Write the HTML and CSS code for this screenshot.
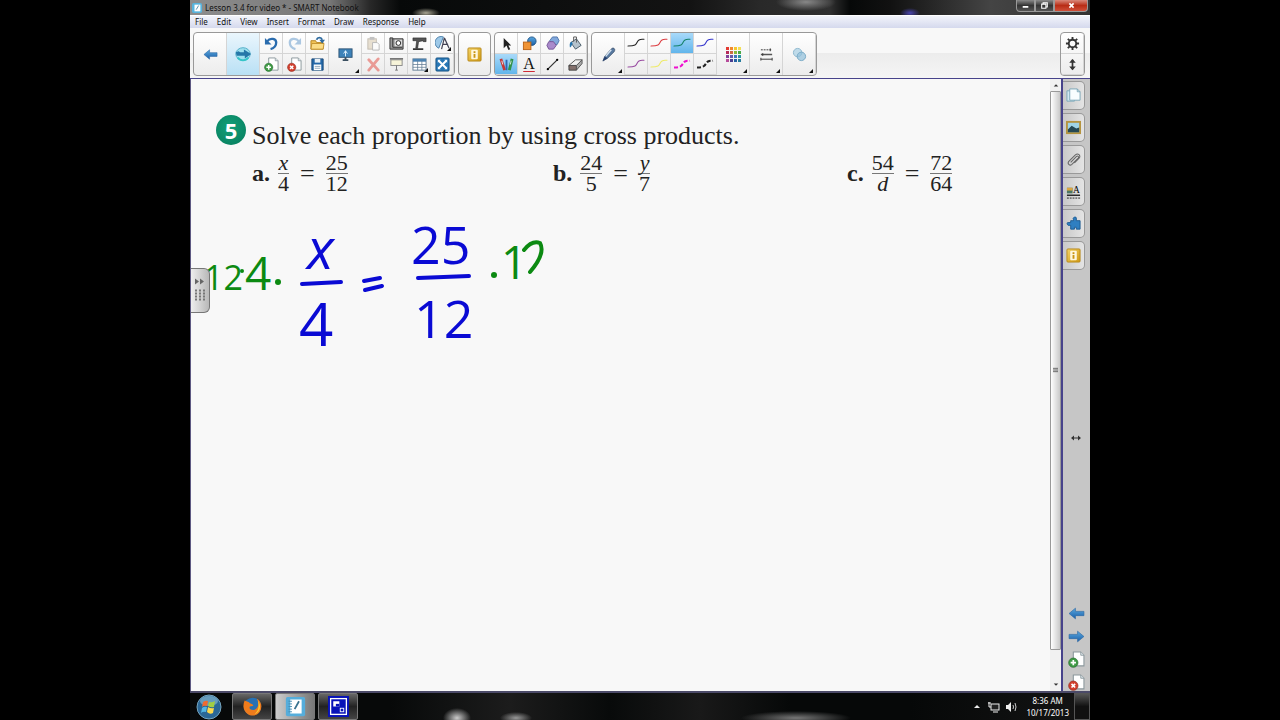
FILE: index.html
```html
<!DOCTYPE html>
<html lang="en">
<head>
    <meta charset="UTF-8">
    <meta name="viewport" content="width=device-width, initial-scale=1.0">
    <title>Lesson 3.4 for video * - SMART Notebook</title>
    <link rel="stylesheet" href="styles.css">
</head>
<body>
    <!-- Shared icons -->
    <svg class="defs" aria-hidden="true">
        <defs>
            <linearGradient id="blue" x1="0" y1="0" x2="0" y2="1">
                <stop offset="0" stop-color="#5aa9e0"/>
                <stop offset="1" stop-color="#1b5fa8"/>
            </linearGradient>
            <linearGradient id="gold" x1="0" y1="0" x2="1" y2="1">
                <stop offset="0" stop-color="#f3d367"/>
                <stop offset="1" stop-color="#d09a12"/>
            </linearGradient>
            <symbol id="arrow-left" viewBox="0 0 16 16"><path d="M1 8l6-5v3h8v4H7v3z" fill="url(#blue)" stroke="#2c68a4" stroke-width=".6"/></symbol>
            <symbol id="arrow-right" viewBox="0 0 16 16"><path d="M15 8L9 3v3H1v4h8v3z" fill="url(#blue)" stroke="#2c68a4" stroke-width=".6"/></symbol>
            <symbol id="page-add" viewBox="0 0 16 16">
                <path d="M5 1h7l3 3v10H5z" fill="#fff" stroke="#8b979c"/><path d="M12 1v3h3" fill="#dbe4e8" stroke="#8b979c" stroke-width=".8"/>
                <circle cx="5" cy="11" r="4.4" fill="#3f9a45" stroke="#226a2b" stroke-width=".6"/><path d="M5 8.5v5M2.5 11h5" stroke="#fff" stroke-width="1.6"/>
            </symbol>
            <symbol id="page-delete" viewBox="0 0 16 16">
                <path d="M5 1h7l3 3v10H5z" fill="#fff" stroke="#8b979c"/><path d="M12 1v3h3" fill="#dbe4e8" stroke="#8b979c" stroke-width=".8"/>
                <circle cx="5" cy="11" r="4.4" fill="#d3402f" stroke="#8e2418" stroke-width=".6"/><path d="M3.3 9.3l3.4 3.4M6.7 9.3l-3.4 3.4" stroke="#fff" stroke-width="1.6"/>
            </symbol>
            <symbol id="info" viewBox="0 0 16 16">
                <rect x="1" y="1" width="14" height="14" rx="1" fill="url(#gold)" stroke="#b98a1c"/>
                <rect x="4.5" y="3" width="7" height="10" rx="1" fill="#fff8df"/><rect x="7" y="4.5" width="2" height="2" fill="#c99512"/><rect x="7" y="7.5" width="2" height="4" fill="#c99512"/>
            </symbol>
            <symbol id="curve" viewBox="0 0 18 10"><path d="M1 8c3 0 5 0 7-1s2-4 4-5 3-.5 5-.8" fill="none" stroke="currentColor" stroke-width="1.1" stroke-linecap="round"/></symbol>
            <symbol id="dash-curve" viewBox="0 0 18 10"><path d="M1 8.5c3 0 5 0 7-1.5s2-3.5 4-4.5 3-.5 5-.8" fill="none" stroke="currentColor" stroke-width="2" stroke-dasharray="4 2"/></symbol>
        </defs>
    </svg>

    <div class="desktop">
        <header class="titlebar">
            <svg class="app-icon" viewBox="0 0 12 12"><rect width="12" height="12" rx="2" fill="#58b4dd"/><rect x="3" y="2" width="7" height="8" fill="#fff"/><path d="M5 8l3-5" stroke="#3b7fa3"/></svg>
            <h1>Lesson 3.4 for video * - SMART Notebook</h1>
            <div class="window-buttons">
                <button class="win" aria-label="Minimize"><svg viewBox="0 0 10 10"><path d="M1 7h8" stroke="#fff" stroke-width="2.5"/></svg></button>
                <button class="win" aria-label="Restore"><svg viewBox="0 0 10 10"><path d="M3 3V1h6v6H7M1 3h6v6H1z" fill="none" stroke="#fff" stroke-width="1.5"/></svg></button>
                <button class="win close" aria-label="Close"><svg viewBox="0 0 10 10"><path d="M2 2l6 6M8 2L2 8" stroke="#fff" stroke-width="2.3"/></svg></button>
            </div>
        </header>

        <nav class="menubar">
            <button>File</button>
            <button>Edit</button>
            <button>View</button>
            <button>Insert</button>
            <button>Format</button>
            <button>Draw</button>
            <button>Response</button>
            <button>Help</button>
        </nav>

        <div class="toolbar">
            <div class="group">
                <button class="tool wide" aria-label="Previous page"><svg><use href="#arrow-left"/></svg></button>
                <button class="tool wide hover" aria-label="Next page"><svg class="big" viewBox="0 0 20 20"><ellipse cx="10" cy="10" rx="8" ry="7" fill="#9ee0ee" stroke="#4ba9c4"/><path d="M2 8l3-1 2 1h4V5l8 5-7 5v-3H3z" fill="#2577a8"/><path d="M4 14c3 4 9 4 12 0" fill="none" stroke="#35c5c8" stroke-width="2"/></svg></button>
                <button class="tool" aria-label="Undo"><svg viewBox="0 0 16 16"><path d="M3 6c4-5 10-3 10 1 0 3-2 6-6 7" fill="none" stroke="#2a6cae" stroke-width="2.5"/><path d="M1 2v7h7z" fill="#2a6cae"/></svg></button>
                <button class="tool" aria-label="Add page"><svg><use href="#page-add"/></svg></button>
                <button class="tool faded" aria-label="Redo"><svg viewBox="0 0 16 16"><path d="M13 6C9 1 3 3 3 7c0 3 2 6 6 7" fill="none" stroke="#5c93c8" stroke-width="2.5"/><path d="M15 2v7H8z" fill="#5c93c8"/></svg></button>
                <button class="tool" aria-label="Delete page"><svg><use href="#page-delete"/></svg></button>
                <button class="tool" aria-label="Open"><svg viewBox="0 0 16 16"><path d="M1 5h5l1 2h7v7H1z" fill="#f0c257" stroke="#b88620"/><path d="M1 14l1-6h13l-1 6z" fill="#fbdd87" stroke="#b88620" stroke-width=".8"/><path d="M7 4c1-3 5-3 6 0" fill="none" stroke="#2d6a9f" stroke-width="2"/><path d="M10 4h6l-3 4z" fill="#2d6a9f"/></svg></button>
                <button class="tool" aria-label="Save"><svg viewBox="0 0 16 16"><path d="M2 2h12v12H2z" fill="#2468a8" stroke="#184878"/><rect x="5" y="2" width="6" height="4" fill="#e8f0f6"/><rect x="4" y="8" width="8" height="6" fill="#fff"/><path d="M5 10h6M5 12h6" stroke="#91a8ba"/></svg></button>
                <button class="tool wide more" aria-label="View screens"><svg viewBox="0 0 16 16"><rect x="1" y="2" width="14" height="9" fill="#3d82b9" stroke="#2f5574"/><path d="M8 4v6M6 7l2-3 2 3" stroke="#e3f4ff" fill="none"/><path d="M5 14h6M8 11v3" stroke="#3a4f60" stroke-width="2"/></svg></button>
                <button class="tool faded" aria-label="Paste"><svg viewBox="0 0 16 16"><rect x="2" y="3" width="9" height="11" fill="#d6c6a8" stroke="#8d8069"/><rect x="4" y="1" width="5" height="3" fill="#888"/><path d="M7 7h5l2 2v6H7z" fill="#fff" stroke="#777"/></svg></button>
                <button class="tool faded" aria-label="Delete"><svg viewBox="0 0 16 16"><path d="M3 3l10 11M13 2L3 14" stroke="#e2453b" stroke-width="3" stroke-linecap="round"/></svg></button>
                <button class="tool" aria-label="Screen capture"><svg viewBox="0 0 16 16"><path d="M1 2h3v1h11v11H1z" fill="#999" stroke="#333"/><path d="M4 3v9h10" fill="none" stroke="#333"/><rect x="6" y="4" width="8" height="7" fill="#ddd"/><circle cx="10" cy="7.5" r="2.5" fill="#fff" stroke="#222"/></svg></button>
                <button class="tool" aria-label="Screen shade"><svg viewBox="0 0 16 16"><path d="M1 2h14" stroke="#777" stroke-width="2"/><rect x="2" y="3" width="12" height="6" fill="#f7f4d9" stroke="#888"/><path d="M8 9v5M6.5 14h3" stroke="#777"/></svg></button>
                <button class="tool" aria-label="Document camera"><svg viewBox="0 0 16 16"><path d="M1 2h14v4h-3V5l-5 1-1 7H4l1-8H1z" fill="#555" stroke="#222" stroke-width=".6"/><path d="M1 14h11" stroke="#333" stroke-width="2"/></svg></button>
                <button class="tool more" aria-label="Table"><svg viewBox="0 0 16 16"><rect x="1" y="2" width="14" height="12" fill="#fff" stroke="#607b93"/><rect x="1" y="2" width="14" height="3" fill="#4c83b2"/><path d="M1 8h14M1 11h14M6 4v10M10.5 4v10" stroke="#607b93" stroke-width=".8"/></svg></button>
                <button class="tool more" aria-label="Measurement tools"><svg viewBox="0 0 16 16"><path d="M9 1A6.5 6.5 0 0 0 4 13z" fill="#9ec9e8" stroke="#4c7faa"/><path d="M10 2l-3 12M10 2l5 11M8 9h6" fill="none" stroke="#445" stroke-width="1.3"/></svg></button>
                <button class="tool" aria-label="Activity builder"><svg viewBox="0 0 16 16"><rect x="1" y="1" width="14" height="14" rx="1" fill="#2877b5" stroke="#1a5485"/><path d="M4 4l8 8M12 4l-8 8" stroke="#fff" stroke-width="2.2"/><path d="M3 3h3L3 6zM13 3v3l-3-3zM3 13v-3l3 3zM13 13h-3l3-3z" fill="#fff"/></svg></button>
            </div>

            <div class="group">
                <button class="tool single" aria-label="Lesson information"><svg><use href="#info"/></svg></button>
            </div>

            <div class="group">
                <button class="tool" aria-label="Select"><svg viewBox="0 0 16 16"><path d="M5 2v11l3-3 2 5 2-1-2-4h3z" fill="#222"/></svg></button>
                <button class="tool selected" aria-label="Pens"><svg viewBox="0 0 16 16"><path d="M2 2l4 12" stroke="#c43838" stroke-width="3"/><path d="M8 3v11" stroke="#2d67b5" stroke-width="2"/><path d="M14 2l-3 12" stroke="#30924a" stroke-width="3"/><path d="M3 4l1 4M13 4l-1 4" stroke="#fff" stroke-width=".8"/></svg></button>
                <button class="tool" aria-label="Shapes"><svg viewBox="0 0 16 16"><circle cx="10.5" cy="5.5" r="4.5" fill="url(#blue)" stroke="#235789"/><rect x="1.5" y="6.5" width="8" height="8" fill="#f09436" stroke="#bb6417"/></svg></button>
                <button class="tool text-tool" aria-label="Text">A</button>
                <button class="tool" aria-label="Regular polygons"><svg viewBox="0 0 16 16"><path d="M8 1h5l2 4-2 4H8L5 5z" fill="#82a8dc" stroke="#5076ac"/><path d="M4 6h5l3 4-3 4H4l-2-4z" fill="#a98acb" stroke="#765697"/></svg></button>
                <button class="tool" aria-label="Lines"><svg viewBox="0 0 16 16"><path d="M3 13L13 3" stroke="#333" stroke-width="1.3"/><circle cx="3" cy="13" r="1.2"/><circle cx="13" cy="3" r="1.2"/></svg></button>
                <button class="tool" aria-label="Fill"><svg viewBox="0 0 16 16"><path d="M3 7l6-4 5 7-6 4z" fill="#b4c2cc" stroke="#4b5d69"/><path d="M6 6V1h3v6" fill="none" stroke="#555"/><path d="M4 6c-3 1-2 4-2 6 2 0 2-3 3-4z" fill="#2775ae"/></svg></button>
                <button class="tool" aria-label="Eraser"><svg viewBox="0 0 16 16"><path d="M1 9l7-6h7l-6 7H1z" fill="#f1f1f1" stroke="#555"/><path d="M1 9h8v5H1z" fill="#83706c" stroke="#444"/><path d="M9 14l6-7V3L9 9z" fill="#aaa" stroke="#555"/></svg></button>
            </div>

            <div class="group">
                <button class="tool wide more" aria-label="Pen types"><svg viewBox="0 0 16 16"><path d="M2 15l2-5 7-8c2-2 5 0 3 3l-7 7z" fill="#5879a0" stroke="#3b5069" stroke-width=".8"/><path d="M5 10l6-7" stroke="#d4e2ef" stroke-width="1.5"/><path d="M2 15l2-5 3 2z" fill="#263f6f"/></svg></button>
                <button class="tool line-black" aria-label="Black pen"><svg class="stroke"><use href="#curve"/></svg></button>
                <button class="tool line-purple" aria-label="Purple pen"><svg class="stroke"><use href="#curve"/></svg></button>
                <button class="tool line-red" aria-label="Red pen"><svg class="stroke"><use href="#curve"/></svg></button>
                <button class="tool line-yellow" aria-label="Yellow highlighter"><svg class="stroke"><use href="#curve"/></svg></button>
                <button class="tool selected line-green" aria-label="Green pen"><svg class="stroke"><use href="#curve"/></svg></button>
                <button class="tool line-magenta" aria-label="Magenta dashed pen"><svg class="stroke"><use href="#dash-curve"/></svg></button>
                <button class="tool line-blue" aria-label="Blue pen"><svg class="stroke"><use href="#curve"/></svg></button>
                <button class="tool line-black" aria-label="Black dashed pen"><svg class="stroke"><use href="#dash-curve"/></svg></button>
                <button class="tool wide more" aria-label="Color"><svg viewBox="1 1 15 15"><path fill="#e33b32" d="M1 1h3v3H1z"/><path fill="#f18a2c" d="M5 1h3v3H5z"/><path fill="#f6c72f" d="M9 1h3v3H9z"/><path fill="#f2df55" d="M13 1h3v3h-3z"/><path fill="#b52b59" d="M1 5h3v3H1z"/><path fill="#cc6a44" d="M5 5h3v3H5z"/><path fill="#88b83b" d="M9 5h3v3H9z"/><path fill="#49a943" d="M13 5h3v3h-3z"/><path fill="#80439a" d="M1 9h3v3H1z"/><path fill="#675aa9" d="M5 9h3v3H5z"/><path fill="#3d79bc" d="M9 9h3v3H9z"/><path fill="#2895a0" d="M13 9h3v3h-3z"/><path fill="#b74c9b" d="M1 13h3v3H1z"/><path fill="#493d91" d="M5 13h3v3H5z"/><path fill="#2562a4" d="M9 13h3v3H9z"/><path fill="#277c9d" d="M13 13h3v3h-3z"/></svg></button>
                <button class="tool wide more" aria-label="Line style"><svg viewBox="0 0 16 16"><path d="M2 3h12" stroke="#333" stroke-dasharray="2 1"/><path d="M2 8h12" stroke="#555" stroke-width="1.5"/><path d="M2 13h12" stroke="#333"/><path d="M2 11.5v3M14 11.5v3M12 1.5v3M4 6.5v3" stroke="#333"/></svg></button>
                <button class="tool wide more" aria-label="Transparency"><svg viewBox="0 0 16 16"><circle cx="6" cy="6" r="4.5" fill="#bfdbea" stroke="#8cb6cd"/><circle cx="10" cy="10" r="4.5" fill="#91c1dc" fill-opacity=".7" stroke="#77aac5"/></svg></button>
            </div>

            <div class="group group-right">
                <button class="tool" aria-label="Customize toolbar"><svg viewBox="0 0 16 16"><circle cx="8" cy="8" r="4" fill="none" stroke="#333" stroke-width="2"/><path d="M8 1v3M8 12v3M1 8h3M12 8h3M3 3l2 2M11 11l2 2M13 3l-2 2M5 11l-2 2" stroke="#333" stroke-width="2"/></svg></button>
                <button class="tool" aria-label="Move toolbar"><svg viewBox="0 0 16 16"><path d="M8 3v10" stroke="#333" stroke-width="1.8"/><path d="M4.5 6L8 2l3.5 4zM4.5 10L8 14l3.5-4z" fill="#333"/></svg></button>
            </div>
        </div>

        <div class="workspace">
            <main class="page">
                <h2 class="exercise"><span class="number">5</span><span class="instructions">Solve each proportion by using cross products.</span></h2>
                <div class="problems">
                    <div class="problem"><b>a.</b><span class="fraction"><i>x</i><span>4</span></span><span class="equals">=</span><span class="fraction"><span>25</span><span>12</span></span></div>
                    <div class="problem"><b>b.</b><span class="fraction"><span>24</span><span>5</span></span><span class="equals">=</span><span class="fraction"><i>y</i><span>7</span></span></div>
                    <div class="problem"><b>c.</b><span class="fraction"><span>54</span><i>d</i></span><span class="equals">=</span><span class="fraction"><span>72</span><span>64</span></span></div>
                </div>

                <!-- Pen layer over the page -->
                <svg class="ink">
                    <g class="ink-blue">
                        <text x="116" y="190" class="slanted">x</text>
                        <path d="M111 205L150 203M173 202L189 199M174 211L191 207M227 199L278 197"/>
                        <text x="108" y="267" class="tall">4</text>
                        <text x="220" y="185">25</text>
                        <text x="223" y="259">12</text>
                    </g>
                    <g class="ink-green">
                        <text x="13" y="211" class="short">12</text>
                        <text x="54" y="211">4</text>
                        <circle cx="51" cy="192" r="2"/>
                        <circle cx="87" cy="203" r="3"/>
                        <circle cx="303" cy="196" r="3"/>
                        <text x="310" y="200">1</text>
                        <path d="M333 171Q341 161 349 164C354 173 345 186 339 193"/>
                    </g>
                </svg>

                <button class="drawer" aria-label="Show page controls"><svg viewBox="0 0 14 30"><path d="M2 3l4 3-4 3zM7 3l4 3-4 3z" fill="#666"/><path d="M3 14v12M7 14v12M11 14v12" stroke="#777" stroke-width="2" stroke-dasharray="2 1"/></svg></button>
            </main>

            <div class="scrollbar">
                <button aria-label="Scroll up"><svg viewBox="0 0 8 8"><path d="M1 6l3-3 3 3z" fill="#333"/></svg></button>
                <div class="track"><div class="thumb"><svg viewBox="0 0 6 6"><path d="M0 1h6M0 3h6M0 5h6" stroke="#555"/></svg></div></div>
                <button aria-label="Scroll down"><svg viewBox="0 0 8 8"><path d="M1 2l3 3 3-3z" fill="#333"/></svg></button>
            </div>

            <aside class="sidebar">
                <div class="tabs">
                    <button class="tab" aria-label="Page sorter"><svg viewBox="0 0 16 16"><path d="M1 3h8v11H1z" fill="#d2e8f1" stroke="#7ba6b7"/><path d="M4 1h8l3 3v9H4z" fill="#f8fdff" stroke="#7ba6b7"/><path d="M12 1v3h3" fill="none" stroke="#7ba6b7"/></svg></button>
                    <button class="tab" aria-label="Gallery"><svg viewBox="0 0 16 16"><rect x="1" y="2" width="14" height="12" fill="#9fd4e6" stroke="#b5943f" stroke-width="2"/><path d="M2 10l4-4 5 3 3-1v5H2z" fill="#254853"/></svg></button>
                    <button class="tab" aria-label="Attachments"><svg viewBox="0 0 16 16"><path d="M5 11l6-6c1.5-1.5 3 0 2 1.5l-7 7c-2 1.500-5-1-3-3.500l7-7c3-2.500 6 1 4 3.500l-5 5" fill="none" stroke="#666" stroke-width="1.1"/></svg></button>
                    <button class="tab" aria-label="Properties"><svg viewBox="0 0 16 16"><rect x="1" y="4" width="6" height="6" fill="#4c7664"/><path d="M1 4h6v3H1z" fill="#dda63f"/><text x="11" y="10" class="letter-icon">A</text><path d="M1 12h14" stroke="#222" stroke-width="1.5"/><path d="M1 15h14" stroke="#222" stroke-dasharray="2 1"/></svg></button>
                    <button class="tab" aria-label="Add-ons"><svg viewBox="0 0 16 16"><path d="M5 5h3V4c-2-3 4-4 3-1v2h4v9h-4v-2H9v2H5v-4H4c-3 1-4-4-1-3h2z" fill="#2f7fc1" stroke="#1d5b92"/></svg></button>
                    <button class="tab" aria-label="Lesson information tab"><svg><use href="#info"/></svg></button>
                </div>
                <button class="side-action" aria-label="Resize sidebar"><svg class="resize" viewBox="0 0 12 12"><path d="M2 6h8" stroke="#333"/><path d="M1 6l3-2.5v5zM11 6L8 3.5v5z" fill="#333"/></svg></button>
                <div class="page-actions">
                    <button class="side-action" aria-label="Back"><svg><use href="#arrow-left"/></svg></button>
                    <button class="side-action" aria-label="Forward"><svg><use href="#arrow-right"/></svg></button>
                    <button class="side-action" aria-label="Insert page"><svg><use href="#page-add"/></svg></button>
                    <button class="side-action" aria-label="Remove page"><svg><use href="#page-delete"/></svg></button>
                </div>
            </aside>
        </div>

        <footer class="taskbar">
            <button class="start" aria-label="Start"><svg viewBox="0 0 26 26"><circle cx="13" cy="13" r="12" fill="#2b6796" stroke="#75a4bd"/><ellipse cx="13" cy="7" rx="9" ry="5" fill="#8dbfd6" opacity=".6"/><path d="M7 8q3-2 5-1l-1 5q-3-1-5 1z" fill="#f06b30"/><path d="M13 8q3 1 6-1l-1 6q-3 1-6-1z" fill="#a2ce43"/><path d="M6 14q2-2 5-1l-1 5q-3-1-5 1z" fill="#55b7e5"/><path d="M12 13q3 2 6 1l-1 5q-3 2-6-1z" fill="#ffd94a"/></svg></button>
            <button class="task" aria-label="Firefox"><svg viewBox="0 0 24 24"><circle cx="12" cy="12" r="10" fill="#2671b5"/><path d="M3 5c-3 7-1 14 6 17 8 2 14-4 13-12-1-4-3-6-5-7 3 5 2 12-4 13-4 0-5-2-4-4l4-1c-1-3-4-2-5-4z" fill="#ee7b1c"/><path d="M18 5c4 5 4 13-4 16 5-4 6-10 4-16z" fill="#f8c732"/></svg></button>
            <button class="task active" aria-label="SMART Notebook"><svg viewBox="0 0 24 24"><rect x="1" y="1" width="22" height="22" rx="2" fill="#55addb"/><rect x="6" y="4" width="13" height="16" fill="#fff"/><path d="M4 6h4M4 9h4M4 12h4M4 15h4M4 18h4" stroke="#4389ae"/><path d="M11 15l5-9" stroke="#38728f" stroke-width="2"/></svg></button>
            <button class="task" aria-label="Screen recorder"><svg viewBox="0 0 24 24"><rect width="24" height="24" fill="#0712b8"/><rect x="3" y="3" width="18" height="18" fill="none" stroke="#fff" stroke-width="1.5"/><path d="M6 6h7v6H6z" fill="#fff"/><path d="M9 9h4v3H9z" fill="#0712b8"/><rect x="14" y="14" width="4" height="4" fill="none" stroke="#fff"/></svg></button>
            <div class="tray">
                <svg viewBox="0 0 12 12"><path d="M3 7l3-3 3 3z" fill="#eee"/></svg>
                <svg viewBox="0 0 12 12"><rect x="3" y="3" width="8" height="6" fill="#222" stroke="#eee"/><path d="M5 11h5M1 1v5h2M0 2h3" stroke="#eee" fill="none"/></svg>
                <svg viewBox="0 0 12 12"><path d="M1 4h2l3-3v10L3 8H1z" fill="#eee"/><path d="M8 4q1 2 0 4M10 2q2 4 0 8" fill="none" stroke="#ccc"/></svg>
            </div>
            <div class="clock"><span>8:36 AM</span><span>10/17/2013</span></div>
            <button class="show-desktop" aria-label="Show desktop"></button>
        </footer>
    </div>
</body>
</html>
```
FILE: styles.css
```css
* {
    box-sizing: border-box;
}
body {
    margin: 0;
    background: #000;
    color: #111;
    font-family: "Noto Sans", "Open Sans", sans-serif;
    font-size: 8px;
}
button {
    margin: 0;
    padding: 0;
    border: 0;
    background: none;
    color: inherit;
    font: inherit;
}
svg {
    display: block;
    flex-shrink: 0;
}
.defs {
    position: absolute;
    width: 0;
    height: 0;
}
.desktop {
    display: flex;
    flex-direction: column;
    min-height: 100vh;
    margin: 0 190px;
}

/* Title bar and menus */
.titlebar {
    display: flex;
    align-items: center;
    height: 15px;
    padding-left: 2px;
    background:
        radial-gradient(ellipse 14px 5px at 236px 13px, #a9a694, transparent),
        radial-gradient(ellipse 10px 5px at 720px 13px, #4a45b0, transparent),
        radial-gradient(ellipse 30px 9px at 616px 2px, #888, transparent),
        linear-gradient(90deg, #8d8d8d 0, #777 140px, #282828 180px, #070909 210px, #131313 500px, #292929 570px, #303030 640px, #060808 660px, #111 700px, #444 800px, #333 100%);
}
.titlebar h1 {
    flex: 1;
    margin: 0 0 0 3px;
    font-size: 8px;
    font-weight: 400;
    line-height: 15px;
}
.app-icon {
    width: 10px;
    height: 10px;
}
.window-buttons {
    display: flex;
    align-self: flex-start;
    margin-right: 2px;
}
.win {
    display: flex;
    justify-content: center;
    align-items: center;
    width: 19px;
    height: 12px;
    border: 1px solid #999;
    border-top: 0;
    background: linear-gradient(#8a8a8a, #333 50%, #555);
}
.win:first-child {
    border-radius: 0 0 0 4px;
}
.win svg {
    width: 7px;
    height: 7px;
}
.close {
    width: 34px;
    border-radius: 0 0 4px;
    background: linear-gradient(#d9897b, #b82d16 50%, #d0503a);
}
.menubar {
    display: flex;
    gap: 9px;
    height: 13px;
    padding: 0 5px;
    border-top: 1px solid #fff;
    background: linear-gradient(#f2f4fb, #d5d9ed);
    line-height: 12px;
}

/* Toolbar */
.toolbar {
    display: flex;
    gap: 3px;
    padding: 4px 5px 2px 3px;
    border-bottom: 1px solid #47438b;
    background: linear-gradient(#f8f8f8 50%, #ececec 50%, #f5f5f5);
}
.group {
    display: grid;
    grid-template-rows: 21px 21px;
    grid-auto-flow: column;
    overflow: hidden;
    border: 1px solid #999;
    border-radius: 4px;
    background: linear-gradient(#fff, #ececec);
}
.group-right {
    margin-left: auto;
}
.tool {
    position: relative;
    display: flex;
    justify-content: center;
    align-items: center;
    width: 23px;
    border-right: 1px solid #d5d5d5;
    border-bottom: 1px solid #d5d5d5;
}
.tool svg {
    width: 15px;
    height: 15px;
}
.tool .big {
    width: 18px;
    height: 18px;
}
.tool .stroke {
    width: 18px;
    height: 10px;
}
.wide,
.single {
    grid-row: span 2;
    width: 33px;
    border-bottom: 0;
}
.single {
    width: 31px;
    border-right: 0;
}
.hover {
    background: linear-gradient(#eaf6fd, #b9e0f5);
}
.selected {
    background: linear-gradient(#a9dafa, #62b5eb);
}
.faded svg {
    opacity: 0.5;
}
.more::after {
    content: "";
    position: absolute;
    right: 2px;
    bottom: 2px;
    border-left: 4px solid transparent;
    border-bottom: 4px solid #111;
}
.text-tool {
    font-family: "Liberation Serif", serif;
    font-size: 16px;
    line-height: 20px;
    text-decoration: underline 1px #cf2b36;
    text-underline-offset: 2px;
}
.letter-icon {
    font-family: "Liberation Serif", serif;
    font-size: 10px;
    text-anchor: middle;
}
.line-black { color: #222; }
.line-purple { color: #984aa0; }
.line-red { color: #dc3c40; }
.line-yellow { color: #eeea68; }
.line-green { color: #16826a; }
.line-magenta { color: #ee10cf; }
.line-blue { color: #3434cc; }

/* Lesson page */
.workspace {
    display: flex;
    flex: 1;
}
.page {
    position: relative;
    flex: 1;
    padding: 36px 0 0 25px;
    border-left: 1px solid #5e5982;
    background: #f8f8f8;
    font-family: "Liberation Serif", serif;
}
.exercise {
    display: flex;
    gap: 6px;
    margin: 0;
    font-size: 26px;
    font-weight: 400;
    line-height: 30px;
    color: #222;
}
.number {
    width: 30px;
    height: 30px;
    border-radius: 50%;
    background: radial-gradient(circle at 45% 40%, #12a07a, #067a5a);
    color: #fff;
    font-family: "Open Sans", sans-serif;
    font-size: 22px;
    font-weight: 700;
    text-align: center;
}
.instructions {
    padding-top: 6px;
}
.problems {
    display: grid;
    grid-template-columns: 301px 294px 1fr;
    padding: 2px 0 0 36px;
    color: #222;
    font-size: 24px;
}
.problem {
    display: flex;
    align-items: center;
    gap: 8px;
}
.fraction {
    display: flex;
    flex-direction: column;
    font-size: 22px;
    line-height: 20px;
    text-align: center;
}
.fraction > :first-child {
    border-bottom: 1px solid #777;
}
.equals {
    padding: 0 3px;
    font-size: 26px;
}
.ink {
    position: absolute;
    left: 0;
    top: 0;
    width: 100%;
    height: 100%;
    font-family: "Open Sans", sans-serif;
    font-size: 52px;
}
.ink path {
    fill: none;
    stroke-width: 4px;
    stroke-linecap: round;
}
.ink-blue {
    fill: #0a0ad4;
    stroke: #0a0ad4;
    stroke-width: 0;
}
.ink-green {
    fill: #0c8a12;
    stroke: #0c8a12;
    stroke-width: 0;
    font-size: 46px;
}
.slanted {
    font-style: italic;
    font-size: 56px;
}
.tall {
    font-size: 60px;
}
.short {
    font-size: 34px;
}
.drawer {
    position: absolute;
    left: 0;
    top: 189px;
    padding: 6px 2px;
    border: 1px solid #777;
    border-left: 0;
    border-radius: 0 6px 6px 0;
    background: linear-gradient(90deg, #eee, #b8b8b8);
}
.drawer svg {
    width: 14px;
    height: 31px;
}

/* Scroll bar */
.scrollbar {
    display: flex;
    flex-direction: column;
    width: 11px;
    background: #f1f1f1;
}
.scrollbar button {
    display: flex;
    justify-content: center;
    align-items: center;
    height: 12px;
}
.scrollbar button svg {
    width: 6px;
    height: 6px;
}
.track {
    flex: 1;
}
.thumb {
    display: flex;
    justify-content: center;
    align-items: center;
    height: 95%;
    border: 1px solid #999;
    border-radius: 1px;
    background: linear-gradient(90deg, #fff, #c9c9c9);
}
.thumb svg {
    width: 5px;
    height: 6px;
}

/* Side tabs */
.sidebar {
    display: flex;
    flex-direction: column;
    justify-content: space-between;
    width: 29px;
    padding: 2px 5px 0 0;
    border-left: 2px solid #47438b;
    background: #c6c6c6;
}
.tabs,
.page-actions {
    display: flex;
    flex-direction: column;
    gap: 3px;
}
.tab {
    display: flex;
    justify-content: center;
    align-items: center;
    height: 29px;
    border: 1px solid #999;
    border-left: 0;
    border-radius: 0 5px 5px 0;
    background: linear-gradient(90deg, #c9c9c9, #e4e4e4);
}
.tab svg {
    width: 15px;
    height: 15px;
}
.side-action {
    display: flex;
    justify-content: flex-end;
}
.side-action svg {
    width: 17px;
    height: 17px;
}
.page-actions {
    gap: 6px;
}
.side-action .resize {
    width: 12px;
    height: 12px;
    margin-right: 3px;
}

/* Task bar */
.taskbar {
    display: flex;
    align-items: center;
    gap: 3px;
    height: 29px;
    padding-left: 6px;
    border-top: 2px solid #4b4a68;
    background:
        radial-gradient(ellipse 14px 10px at 267px 25px, #ccc, transparent),
        radial-gradient(ellipse 16px 6px at 326px 25px, #999, transparent),
        radial-gradient(ellipse 55px 7px at 606px 25px, #777, transparent),
        linear-gradient(90deg, #070909 0, #070909 200px, #1c1c1c 320px, #080a0a 420px, #191919 510px, #060808 600px, #060808 720px, #141414 100%);
    color: #fff;
}
.start {
    margin-right: 7px;
}
.start svg {
    width: 26px;
    height: 26px;
}
.task {
    display: flex;
    justify-content: center;
    align-items: center;
    width: 40px;
    height: 27px;
    border: 1px solid #777;
    border-radius: 2px;
    background: linear-gradient(#666, #222 50%, #444);
}
.task svg {
    width: 21px;
    height: 21px;
}
.active {
    background: linear-gradient(90deg, #ccc, #777);
}
.tray {
    display: flex;
    gap: 5px;
    margin-left: auto;
}
.tray svg {
    width: 12px;
    height: 12px;
}
.clock {
    display: flex;
    flex-direction: column;
    padding: 0 2px 0 6px;
    line-height: 12px;
    text-align: center;
}
.show-desktop {
    align-self: stretch;
    width: 16px;
    border: 1px solid #555;
    background: linear-gradient(#555, #111 50%);
}
```
